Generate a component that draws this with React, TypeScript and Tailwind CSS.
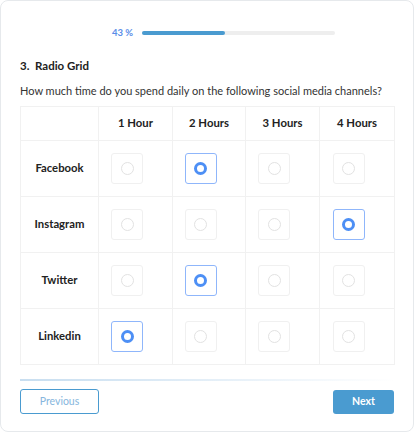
import React from "react";

const cols = ["1 Hour", "2 Hours", "3 Hours", "4 Hours"];
const rows: { name: string; sel: number }[] = [
  { name: "Facebook", sel: 1 },
  { name: "Instagram", sel: 3 },
  { name: "Twitter", sel: 1 },
  { name: "Linkedin", sel: 0 },
];

function Radio({ checked }: { checked: boolean }) {
  return (
    <div
      className={
        "w-[32px] h-[31px] rounded-[3px] border flex items-center justify-center mr-[17px] " +
        (checked ? "border-[#8fb6fb]" : "border-[#f0f0f0]")
      }
    >
      {checked ? (
        <div className="w-[13px] h-[13px] rounded-full border-[3.5px] border-[#4d8ff5] bg-white" />
      ) : (
        <div className="w-[13px] h-[13px] rounded-full border border-[#e2e2e2] bg-white" />
      )}
    </div>
  );
}

export default function App() {
  return (
    <div
      className="w-[414px] h-[432px] bg-white border border-[#e6e9ec] rounded-[8px] overflow-hidden"
      style={{ fontFamily: 'Lato, "Open Sans", sans-serif' }}
    >
      <div className="flex items-center pt-[25px] pl-[111px]">
        <span className="text-[9.5px] font-bold text-[#5a8de8] w-[30px]">43 %</span>
        <div className="w-[193px] h-[4px] bg-[#eeeeee] rounded-full">
          <div className="w-[83px] h-[4px] bg-[#4a9bd0] rounded-full" />
        </div>
      </div>
      <div className="px-[19px]">
        <div className="mt-[17px] text-[11.5px] font-bold text-[#222] leading-[18px]">3.&nbsp; Radio Grid</div>
        <div className="mt-[7px] text-[11px] text-[#333] leading-[18px] whitespace-nowrap">
          How much time do you spend daily on the following social media channels?
        </div>
        <div className="mt-[6px] border border-[#f1f1f1] w-[375px]">
          <div className="grid grid-cols-[78px_74px_73px_74px_74px] h-[33px]">
            <div className="border-r border-[#f1f1f1]" />
            {cols.map((c, i) => (
              <div
                key={c}
                className={
                  "flex items-center justify-center text-[11.3px] font-bold text-[#222] " +
                  (i < 3 ? "border-r border-[#f1f1f1]" : "")
                }
              >
                {c}
              </div>
            ))}
          </div>
          {rows.map((r) => (
            <div
              key={r.name}
              className="grid grid-cols-[78px_74px_73px_74px_74px] h-[56px] border-t border-[#f1f1f1]"
            >
              <div className="flex items-center justify-center text-[11.3px] font-bold text-[#222] border-r border-[#f1f1f1]">
                {r.name}
              </div>
              {cols.map((c, i) => (
                <div
                  key={c}
                  className={
                    "flex items-center justify-center " + (i < 3 ? "border-r border-[#f1f1f1]" : "")
                  }
                >
                  <Radio checked={r.sel === i} />
                </div>
              ))}
            </div>
          ))}
        </div>
        <div className="mt-[14px] h-[2px] w-[375px] bg-gradient-to-r from-[#c8def0] to-transparent" />
        <div className="mt-[8px] flex justify-between items-center w-[375px]">
          <button className="w-[79px] h-[25px] rounded-[3px] border-[1.5px] border-[#4a9bd0] text-[10.5px] text-[#86b6dd] bg-white">
            Previous
          </button>
          <button className="w-[61px] h-[24px] rounded-[3px] bg-[#4a9bd0] text-[10.5px] font-bold text-white mr-[1px]">
            Next
          </button>
        </div>
      </div>
    </div>
  );
}
